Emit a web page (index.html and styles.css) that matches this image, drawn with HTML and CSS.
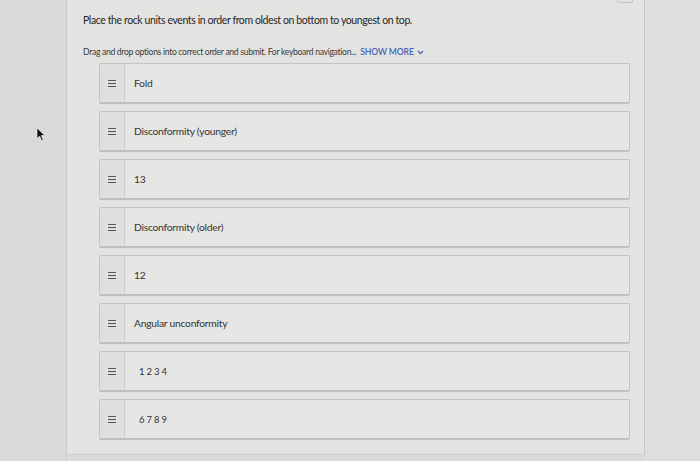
FILE: index.html
```html
<!DOCTYPE html>
<html>
<head>
<meta charset="utf-8">
<link rel="stylesheet" href="styles.css">
</head>
<body>
<div class="page">
  <div class="gutter"></div>
  <div class="panel">
    <div class="topbtn"></div>
    <p class="title">Place the rock units events in order from oldest on bottom to youngest on top.</p>
    <p class="sub">Drag and drop options into correct order and submit. For keyboard navigation... <span class="more">SHOW MORE <svg class="chev" width="7" height="5" viewBox="0 0 7 5"><path d="M1 1 L3.5 3.6 L6 1" fill="none" stroke="#4a63b8" stroke-width="1.3"/></svg></span></p>
    <ul class="list">
      <li class="item"><span class="handle"><i></i><i></i><i></i></span><span class="label">Fold</span></li>
      <li class="item"><span class="handle"><i></i><i></i><i></i></span><span class="label">Disconformity (younger)</span></li>
      <li class="item"><span class="handle"><i></i><i></i><i></i></span><span class="label">13</span></li>
      <li class="item"><span class="handle"><i></i><i></i><i></i></span><span class="label">Disconformity (older)</span></li>
      <li class="item"><span class="handle"><i></i><i></i><i></i></span><span class="label">12</span></li>
      <li class="item"><span class="handle"><i></i><i></i><i></i></span><span class="label">Angular unconformity</span></li>
      <li class="item"><span class="handle"><i></i><i></i><i></i></span><span class="label mono">1234</span></li>
      <li class="item"><span class="handle"><i></i><i></i><i></i></span><span class="label mono">6789</span></li>
    </ul>
  </div>
  <div class="rightside"></div>
  <svg class="cursor" width="10" height="15" viewBox="0 0 10 15"><path d="M1 1 L1 11.5 L3.6 9.2 L5.6 13.6 L7.2 12.9 L5.3 8.6 L8.8 8.4 Z" fill="#111" stroke="#fff" stroke-width="0.6"/></svg>
</div>
</body>
</html>
```
FILE: styles.css
```css
* { box-sizing: border-box; }
html, body { margin: 0; padding: 0; }
body {
  width: 700px;
  height: 461px;
  overflow: hidden;
  background: #dadbd9;
  font-family: "Lato", "Liberation Sans", sans-serif;
  color: #2e2e2e;
}
.page {
  position: relative;
  display: flex;
  height: 461px;
}
.gutter {
  width: 67px;
  flex: none;
  background: #d9dad8;
  border-right: 1px solid #c9cac8;
}
.panel {
  position: relative;
  width: 578px;
  flex: none;
  height: 455px;
  background: #e3e3e1;
  border-right: 1px solid #c6c7c5;
  border-bottom: 1px solid #cfd0ce;
  padding: 13px 0 0 16px;
}
.rightside {
  flex: 1;
  background: #dedfdd;
}
.topbtn {
  position: absolute;
  top: -4px;
  left: 550px;
  width: 16px;
  height: 7px;
  border: 1px solid #c4c4c2;
  border-radius: 2px;
}
.title {
  margin: 0;
  font-size: 10.5px;
  line-height: 15px;
  color: #262626;
  letter-spacing: -0.4px;
}
.sub {
  margin: 18px 0 0 0;
  font-size: 8.6px;
  line-height: 12px;
  color: #3a3a3a;
  letter-spacing: -0.3px;
}
.more {
  color: #4a63b8;
  font-weight: 600;
  letter-spacing: -0.1px;
  margin-left: 2px;
}
.chev { vertical-align: 0; margin-left: 1px; }
.list {
  list-style: none;
  margin: 5px 0 0 16px;
  padding: 0;
  width: 531px;
  display: flex;
  flex-direction: column;
  gap: 7px;
}
.item {
  display: flex;
  align-items: center;
  height: 41px;
  background: #e6e6e4;
  border: 1px solid #c4c5c3;
  border-bottom: 2px solid #c0c1bf;
  border-radius: 2px;
}
.handle {
  width: 25px;
  height: 100%;
  flex: none;
  display: flex;
  flex-direction: column;
  justify-content: center;
  align-items: center;
  gap: 2px;
  background: #dfdfdd;
  border-right: 1px solid #cacbc9;
}
.handle i {
  display: block;
  width: 8px;
  height: 1px;
  background: #555;
}
.label {
  padding-left: 9px;
  font-size: 10.3px;
  color: #333;
  letter-spacing: -0.25px;
}
.mono {
  letter-spacing: 2px;
  font-size: 9.5px;
  padding-left: 14px;
}
.cursor {
  position: absolute;
  left: 36px;
  top: 127px;
}
```
